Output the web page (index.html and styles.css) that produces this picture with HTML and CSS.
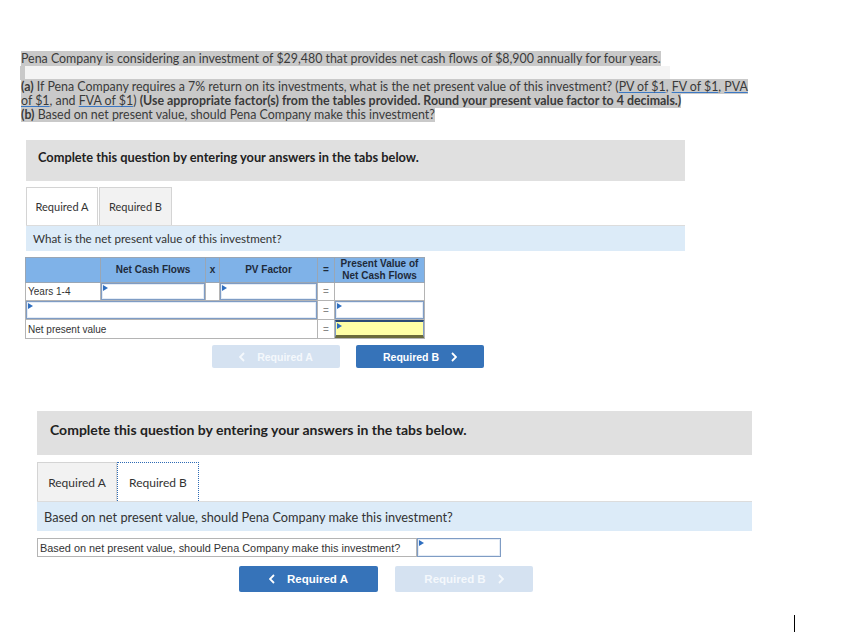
FILE: index.html
```html
<!DOCTYPE html>
<html lang="en">
<head>
  <meta charset="UTF-8">
  <title>Pena Company – Net Present Value</title>
  <link rel="stylesheet" href="styles.css">
</head>
<body>
  <div class="intro">
    <p><span class="hl">Pena Company is considering an investment of $29,480 that provides net cash flows of $8,900 annually for four years.</span></p>
    <div class="blank"></div>
    <p><span class="hl"><b>(a)</b> If Pena Company requires a 7% return on its investments, what is the net present value of this investment? (<a href="#">PV of $1</a>, <a href="#">FV of $1</a>, <a href="#">PVA</a><br><a href="#">of $1</a>, and <a href="#">FVA of $1</a>) <b>(Use appropriate factor(s) from the tables provided. Round your present value factor to 4 decimals.)</b><br><b>(b)</b> Based on net present value, should Pena Company make this investment?</span></p>
  </div>

  <section class="q q1">
    <div class="banner">Complete this question by entering your answers in the tabs below.</div>
    <div class="tabs">
      <div class="tab on">Required A</div>
      <div class="tab">Required B</div>
    </div>
    <div class="prompt">What is the net present value of this investment?</div>

    <table class="grid">
      <colgroup>
        <col class="w-label"><col class="w-cash"><col class="w-op"><col class="w-factor"><col class="w-eq"><col class="w-pv">
      </colgroup>
      <tr class="head">
        <th></th>
        <th>Net Cash Flows</th>
        <th>x</th>
        <th>PV Factor</th>
        <th>=</th>
        <th>Present Value of<br>Net Cash Flows</th>
      </tr>
      <tr class="r1">
        <td class="label">Years 1-4</td>
        <td class="box"><div class="inp"></div></td>
        <td></td>
        <td class="box"><div class="inp"></div></td>
        <td class="eq">=</td>
        <td></td>
      </tr>
      <tr class="r2">
        <td class="box" colspan="4"><div class="inp"></div></td>
        <td class="eq">=</td>
        <td class="box"><div class="inp"></div></td>
      </tr>
      <tr class="r3">
        <td class="label" colspan="4">Net present value</td>
        <td class="eq">=</td>
        <td class="box"><div class="inp total"></div></td>
      </tr>
    </table>

    <div class="nav">
      <button class="btn off"><svg class="chev" viewBox="0 0 6 10"><polyline points="5,1 1,5 5,9"/></svg>Required A</button>
      <button class="btn">Required B<svg class="chev after" viewBox="0 0 6 10"><polyline points="1,1 5,5 1,9"/></svg></button>
    </div>
  </section>

  <section class="q q2">
    <div class="banner">Complete this question by entering your answers in the tabs below.</div>
    <div class="tabs">
      <div class="tab">Required A</div>
      <div class="tab on focus">Required B</div>
    </div>
    <div class="prompt">Based on net present value, should Pena Company make this investment?</div>

    <div class="answer">
      <div class="ask">Based on net present value, should Pena Company make this investment?</div>
      <div class="pick"></div>
    </div>

    <div class="nav">
      <button class="btn"><svg class="chev" viewBox="0 0 6 10"><polyline points="5,1 1,5 5,9"/></svg>Required A</button>
      <button class="btn off">Required B<svg class="chev after" viewBox="0 0 6 10"><polyline points="1,1 5,5 1,9"/></svg></button>
    </div>
  </section>

  <span class="caret"></span>
</body>
</html>
```

FILE: styles.css
```css
body {
  margin: 0;
  width: 844px; height: 635px; overflow: hidden;
  position: relative;
  font-family: Lato, 'Open Sans', sans-serif;
  color: #3a3a3a;
  background: #ffffff;
}

/* problem statement, shown as selected text */
.intro { padding: 52px 0 0 21px; font-size: 12.4px; line-height: 14px; white-space: nowrap; }
.intro p { margin: 0; }
.hl { background: #c9c9c9; }
.intro a { color: #3a3a3a; text-decoration: underline; text-decoration-color: #3b78c4; }
.blank {
  width: 650px; height: 14px; box-sizing: border-box;
  background: #f4f4f4; border-left: 5px solid #c9c9c9; margin-left: -1px;
}

/* question blocks */
.q1 { margin: 18px 0 0 26px; width: 659px; }
.q2 { margin: 43px 0 0 37px; width: 715px; }

.banner {
  box-sizing: border-box;
  background: #e0e0e0; font-weight: bold; color: #222;
}
.q1 .banner { height: 41px; padding: 9px 0 0 12px; font-size: 12.8px; }
.q2 .banner { height: 44px; padding: 10px 0 0 13px; font-size: 14px; }

.tabs { display: flex; border-bottom: 1px solid #dcdcdc; }
.q1 .tabs { margin-top: 6px; height: 38px; }
.q2 .tabs { margin-top: 7px; height: 39px; }
.tab {
  display: flex; align-items: center; justify-content: center;
  background: #f2f2f2; border: 1px solid #d4d4d4; border-bottom: none;
  color: #333; box-sizing: border-box;
}
.tab.on { background: #ffffff; }
.q1 .tab { width: 72px; font-size: 11px; }
.q1 .tab + .tab { width: 73px; margin-left: 1px; }
.q2 .tab { width: 80px; font-size: 12px; }
.q2 .tab + .tab { width: 82px; }
.tab.focus { border: 1px dotted #2e6bb5; border-bottom: none; }

.prompt { display: flex; align-items: center; background: #dcebf8; color: #333; }
.q1 .prompt { height: 25px; padding-left: 7px; font-size: 11.6px; }
.q2 .prompt { height: 29px; padding-left: 7px; font-size: 12.75px; }

/* worksheet table */
.grid {
  margin: 6px 0 0 -1px;
  border-collapse: collapse; table-layout: fixed;
  width: 399px;
  font-family: 'Liberation Sans', Arial, sans-serif; font-size: 10px; color: #333;
}
.w-label { width: 75px; }
.w-cash { width: 105px; }
.w-op { width: 14px; }
.w-factor { width: 98px; }
.w-eq { width: 17px; }
.w-pv { width: 90px; }
.grid th, .grid td { border: 1px solid #b4b4b4; padding: 0; }
.grid .head th {
  height: 24px; background: #7fb2e8; border-color: #9aa6b4;
  font-weight: bold; text-align: center; line-height: 12px; color: #1e2a3a;
}
.grid .r1 td { height: 16px; }
.grid .r2 td, .grid .r3 td { height: 17px; }
.grid .label { padding-left: 2px; }
.grid .eq { text-align: center; color: #888; }
.grid .box { padding: 0; }
.inp {
  position: relative; height: 100%; box-sizing: border-box;
  border: 1px solid #7f9cc4; box-shadow: inset 0 0 0 1px #e4ecf6;
  background: #ffffff;
}
.r1 .inp { height: 17px; }
.r2 .inp, .r3 .inp { height: 18px; }
.inp::before, .pick::before {
  content: ''; position: absolute; top: 1px; left: 1px;
  border-top: 3px solid transparent; border-bottom: 3px solid transparent;
  border-left: 5px solid #2f6fc0;
}
.inp.total {
  background: #ffffa6; border-top: 2px solid #2b4a74; border-bottom: 3px solid #6b6b3b;
  box-shadow: none;
}

/* navigation buttons */
.nav { display: flex; }
.q1 .nav { margin: 6px 0 0 186px; gap: 16px; }
.q2 .nav { margin: 9px 0 0 202px; gap: 17px; }
.btn {
  display: flex; align-items: center; justify-content: center;
  border: none; border-radius: 2px; background: #3673b9; color: #ffffff;
  font-family: 'Liberation Sans', Arial, sans-serif; font-weight: bold;
  padding: 0; cursor: pointer;
}
.btn.off { background: #d5e2f1; color: #f4f8fc; }
.chev { width: 6px; height: 10px; margin-right: 12px; fill: none; stroke: currentColor; stroke-width: 1.8; }
.chev.after { margin: 0 0 0 12px; }
.q1 .btn { width: 128px; height: 23px; font-size: 10.5px; }
.q2 .btn { width: 139px; height: 26px; font-size: 11.5px; }
.q2 .btn + .btn { width: 138px; }

/* answer row in part b */
.answer { display: flex; margin-top: 7px; height: 19px; }
.ask {
  width: 380px; box-sizing: border-box; border: 1px solid #b4b4b4;
  padding-left: 2px; display: flex; align-items: center;
  font-family: 'Liberation Sans', Arial, sans-serif; font-size: 10.9px; color: #333;
}
.pick {
  position: relative; width: 84px; box-sizing: border-box;
  border: 1px solid #7f9cc4; box-shadow: inset 0 0 0 1px #e4ecf6;
}

.caret { position: absolute; left: 794px; top: 615px; width: 1px; height: 17px; background: #000; }
```
